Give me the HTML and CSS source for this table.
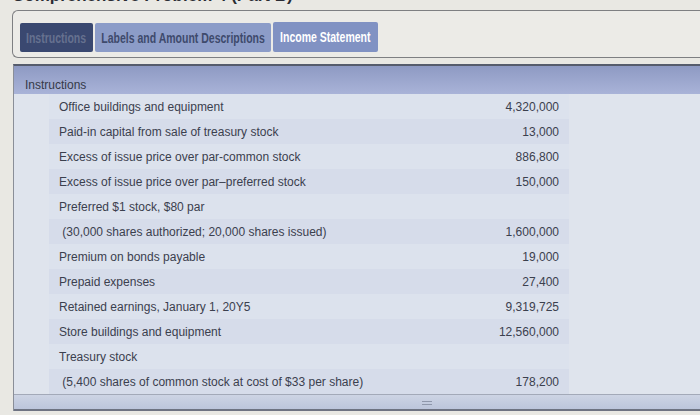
FILE: index.html
```html
<!DOCTYPE html>
<html>
<head>
<meta charset="utf-8">
<link rel="stylesheet" href="styles.css">
</head>
<body>
<div class="title"><span>Comprehensive Problem 4 (Part B)</span></div>
<div class="tabbox">
  <div class="tab tab-active"><span class="tab-text">Instructions</span></div>
  <div class="tab tab-labels"><span class="tab-text">Labels and Amount Descriptions</span></div>
  <div class="tab tab-income"><span class="tab-text">Income Statement</span></div>
</div>
<div class="panel">
  <div class="panel-head">Instructions</div>
  <div class="rows">
    <div class="row"><span>Office buildings and equipment</span><span class="amt">4,320,000</span></div>
    <div class="row alt"><span>Paid-in capital from sale of treasury stock</span><span class="amt">13,000</span></div>
    <div class="row"><span>Excess of issue price over par-common stock</span><span class="amt">886,800</span></div>
    <div class="row alt"><span>Excess of issue price over par–preferred stock</span><span class="amt">150,000</span></div>
    <div class="row"><span>Preferred $1 stock, $80 par</span><span class="amt"></span></div>
    <div class="row alt"><span>&nbsp;(30,000 shares authorized; 20,000 shares issued)</span><span class="amt">1,600,000</span></div>
    <div class="row"><span>Premium on bonds payable</span><span class="amt">19,000</span></div>
    <div class="row alt"><span>Prepaid expenses</span><span class="amt">27,400</span></div>
    <div class="row"><span>Retained earnings, January 1, 20Y5</span><span class="amt">9,319,725</span></div>
    <div class="row alt"><span>Store buildings and equipment</span><span class="amt">12,560,000</span></div>
    <div class="row"><span>Treasury stock</span><span class="amt"></span></div>
    <div class="row alt"><span>&nbsp;(5,400 shares of common stock at cost of $33 per share)</span><span class="amt">178,200</span></div>
  </div>
  <div class="panel-foot"><span class="grip"></span></div>
</div>
</body>
</html>
```
FILE: styles.css
```css
html, body {
  margin: 0;
  padding: 0;
}
body {
  width: 700px;
  height: 415px;
  overflow: hidden;
  background: #e9e8e3;
  font-family: "Liberation Sans", Arial, sans-serif;
  color: #3a3f4d;
}
.title {
  height: 5px;
  overflow: hidden;
  padding-left: 12px;
}
.title span {
  display: block;
  margin-top: -14px;
  font-size: 17px;
  font-weight: bold;
  color: #2a2c33;
  white-space: nowrap;
}
.tabbox {
  margin: 5px 0 0 12px;
  height: 48px;
  box-sizing: border-box;
  border: 1px solid #7e7f82;
  border-right: none;
  border-radius: 6px 0 0 6px;
  padding: 12px 0 0 7px;
  display: flex;
  align-items: flex-start;
  gap: 2px;
  background: #ecebe7;
}
.tab {
  height: 29px;
  box-sizing: border-box;
  display: flex;
  align-items: center;
  justify-content: center;
  font-weight: bold;
  font-size: 14px;
  border-radius: 2px;
  white-space: nowrap;
  overflow: hidden;
}
.tab-text {
  display: inline-block;
  transform: scaleX(0.75);
}
.tab-active {
  width: 73px;
  background: #3a4870;
  color: #66718f;
}
.tab-labels {
  width: 176px;
  background: #8c9cc8;
  color: #3e4a6c;
}
.tab-income {
  width: 105px;
  height: 30px;
  margin-top: -1px;
  background: #8192c3;
  color: #ffffff;
}
.panel {
  margin: 6px 0 0 13px;
  border-top: 2px solid #565c6c;
  border-left: 1px solid #8a8e98;
  background: #dfe4ed;
}
.panel-head {
  height: 28px;
  box-sizing: border-box;
  padding: 12px 0 0 11px;
  font-size: 12px;
  line-height: 14px;
  color: #353a48;
  background: linear-gradient(#8e9ac3, #a9b3d8);
}
.rows {
  display: flex;
  flex-direction: column;
}
.row {
  width: 520px;
  margin-left: 35px;
  height: 25px;
  box-sizing: border-box;
  padding: 0 10px;
  display: flex;
  align-items: center;
  justify-content: space-between;
  font-size: 12px;
  color: #3b404e;
  background: #dce2ed;
}
.row.alt {
  background: #d6dcea;
}
.amt {
  text-align: right;
}
.panel-foot {
  height: 14px;
  border-top: 1px solid #a3a9b8;
  border-bottom: 2px solid #6e7382;
  background: linear-gradient(#cdd4e4, #bcc5db);
  position: relative;
}
.grip {
  position: absolute;
  left: 408px;
  top: 6px;
  width: 10px;
  height: 2px;
  border-top: 1px solid #8f97ab;
  border-bottom: 1px solid #8f97ab;
}
```
